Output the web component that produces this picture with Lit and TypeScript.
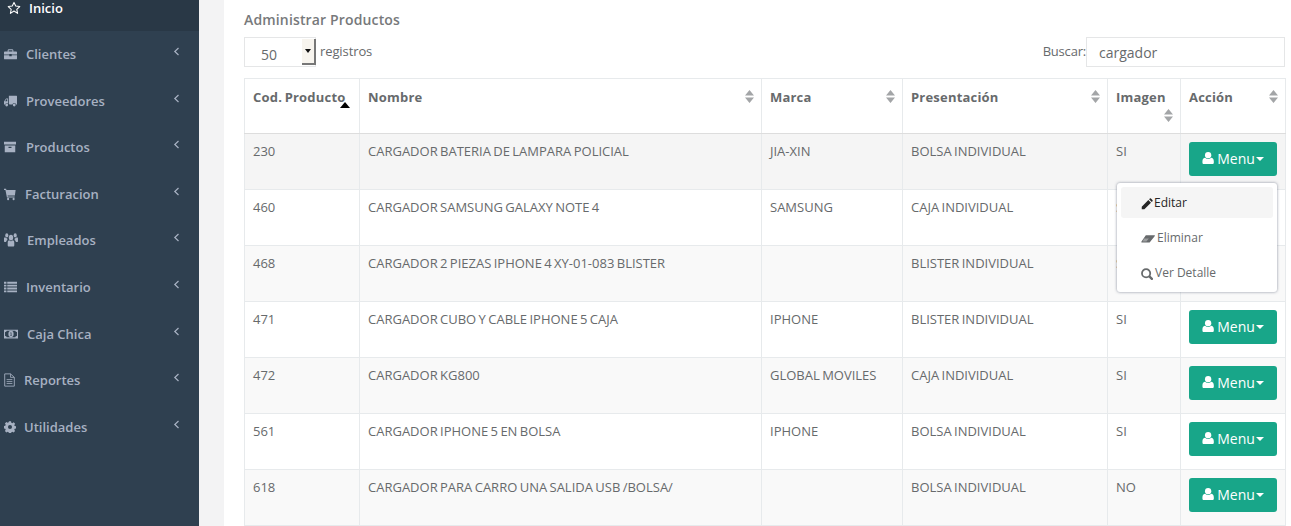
import { LitElement, html, css, svg } from 'lit';
import { customElement } from 'lit/decorators.js';

// icons drawn on a 16x16 box, roughly the font-awesome shapes
const icons: Record<string, unknown> = {
  star: svg`<path fill="none" stroke="currentColor" stroke-width="1.2" stroke-linejoin="round" d="M8 1.6l2 4.2 4.6.6-3.4 3.2.9 4.6L8 11.4l-4.1 2.8.9-4.6L1.400 6.400 6 5.800z"/>`,
  briefcase: svg`<path fill="currentColor" d="M5.500 2.500h5l1 1V5H15a1 1 0 0 1 1 1v2.500H9.500V8h-3v.5H0V6a1 1 0 0 1 1-1h3.500V3.500zM5.700 3.700V5h4.600V3.700zM0 9.500h6.500v1h3v-1H16V13a1 1 0 0 1-1 1H1a1 1 0 0 1-1-1z"/>`,
  truck: svg`<path fill="currentColor" d="M6 2h9.500a.5.500 0 0 1 .5.500V12h-1.200a2.300 2.300 0 0 0-4.400 0H6.700a2.300 2.300 0 0 0-.7-1zM5 5v6a2.300 2.300 0 0 0-3.700 1H.4a.4.4 0 0 1-.4-.4V8.500L2.500 5zM4 6H3L1.300 8.200H4z"/><circle fill="currentColor" cx="3.300" cy="12.500" r="1.700"/><circle fill="currentColor" cx="12.600" cy="12.500" r="1.700"/>`,
  archive: svg`<path fill="currentColor" d="M0 2h16v3.200H0zM1 6.200h14V14H1zM6 7.800v1.400h4V7.800z" fill-rule="evenodd"/>`,
  cart: svg`<path fill="currentColor" d="M0 2h2.800l.4 1.400H15.500l-1 6.200H4.800l.3 1.200h9.100V12H3.900L1.900 3.300H0z"/><circle fill="currentColor" cx="5.500" cy="13.800" r="1.400"/><circle fill="currentColor" cx="12.800" cy="13.800" r="1.400"/>`,
  users: svg`<g transform="translate(0 -2) scale(.94 1.250)"><circle fill="currentColor" cx="8.500" cy="5.800" r="2.700"/><circle fill="currentColor" cx="3.400" cy="3.800" r="1.900"/><circle fill="currentColor" cx="13.600" cy="3.800" r="1.900"/><path fill="currentColor" d="M4.500 10.500c0-1.500 1-2.200 2-2.200.6.500 1.300.8 2 .8s1.400-.3 2-.8c1 0 2 .7 2 2.200v2.300c0 .8-.6 1.200-1.200 1.200H5.700c-.6 0-1.200-.4-1.200-1.200zM0 6.800C0 6 .5 5.500 1.500 5.500c.5.500 1.200.8 2 .8h.4c-.2.600 0 1.200.5 1.700-1 .3-1.700 1-1.900 1.900H1C.4 9.900 0 9.500 0 9zM17 6.800C17 6 16.500 5.500 15.500 5.500c-.5.500-1.200.8-2 .8h-.4c.2.600 0 1.200-.5 1.700 1 .3 1.700 1 1.900 1.900H16c.6 0 1-.4 1-.9z"/></g>`,
  list: svg`<path fill="currentColor" d="M0 2h3v2.200H0zM4 2h12v2.200H4zM0 5.300h3v2.200H0zM4 5.300h12v2.200H4zM0 8.600h3v2.200H0zM4 8.600h12v2.200H4zM0 11.900h3v2.200H0zM4 11.900h12v2.200H4z"/>`,
  money: svg`<path fill="currentColor" fill-rule="evenodd" d="M0 3h16v10H0zM1.200 5.600v4.800a2 2 0 0 1 2 1.400h9.600a2 2 0 0 1 2-1.400V5.600a2 2 0 0 1-2-1.400H3.200a2 2 0 0 1-2 1.400z"/><ellipse fill="currentColor" cx="8" cy="8" rx="3" ry="3.600"/><path fill="#2f4050" d="M7.200 6.300h1.300v3.200h.6v.6H7v-.6h.7V7.200h-.5z"/>`,
  file: svg`<path fill="none" stroke="currentColor" stroke-width="1.100" d="M1 1h8.500L15 5v10H1z"/><path fill="none" stroke="currentColor" d="M9.500 1v4H15M3.800 7.500h8.400M3.800 9.800h8.400M3.800 12h8.400"/>`,
  cog: svg`<path fill="currentColor" fill-rule="evenodd" d="M6.600 1h2.800l.4 2 1.300.6 1.700-1.100 2 2-1.100 1.700.6 1.300 2 .4v2.800l-2 .4-.6 1.300 1.100 1.700-2 2-1.700-1.100-1.300.6-.4 2H6.600l-.4-2-1.300-.6-1.700 1.100-2-2 1.100-1.700-.6-1.300-2-.4V7.300l2-.4.600-1.300-1.100-1.700 2-2 1.700 1.100 1.300-.6zM8 6a2.700 2.700 0 1 0 0 5.400A2.700 2.700 0 0 0 8 6z" transform="translate(0 -.7)"/>`,
  user: svg`<circle fill="currentColor" cx="7" cy="4.800" r="3.600"/><path fill="currentColor" d="M3.600 7.800c.9.900 2.100 1.400 3.400 1.400s2.500-.5 3.400-1.400c1.800.2 3.100 1.500 3.100 4v1.500c0 .9-.7 1.500-1.500 1.500H2c-.8 0-1.500-.6-1.500-1.500v-1.500c0-2.500 1.300-3.800 3.100-4z"/>`,
  pencil: svg`<path fill="currentColor" d="M1 11.500L9.800 2.700l3.500 3.500L4.500 15H1zM10.800 1.700l1-1a1 1 0 0 1 1.400 0l2.100 2.100a1 1 0 0 1 0 1.400l-1 1z"/>`,
  eraser: svg`<path fill="currentColor" d="M5.500 3h9.800a.6.600 0 0 1 .5.900l-5.700 8.300a1 1 0 0 1-.8.300H.9a.6.600 0 0 1-.5-.9z"/><path fill="#fff" d="M3.600 7.200l5.400.1-2.800 4-4.300.1z" opacity=".35"/>`,
  search: svg`<path fill="none" stroke="currentColor" stroke-width="2.400" d="M6.800 1.500a5.500 5.500 0 1 0 0 11 5.500 5.500 0 0 0 0-11z"/><path fill="none" stroke="currentColor" stroke-width="3" stroke-linecap="round" d="M11.500 11.500l3 3"/>`,
};

const nav = [
  { label: 'Clientes', icon: 'briefcase', w: 13, h: 14, gap: 9 },
  { label: 'Proveedores', icon: 'truck', w: 13, h: 14, gap: 9 },
  { label: 'Productos', icon: 'archive', w: 12, h: 14, gap: 10 },
  { label: 'Facturacion', icon: 'cart', w: 12, h: 14, gap: 9 },
  { label: 'Empleados', icon: 'users', w: 14, h: 14, gap: 9 },
  { label: 'Inventario', icon: 'list', w: 13, h: 14, gap: 9 },
  { label: 'Caja Chica', icon: 'money', w: 14, h: 14, gap: 9 },
  { label: 'Reportes', icon: 'file', w: 11, h: 14, gap: 9 },
  { label: 'Utilidades', icon: 'cog', w: 12, h: 12, gap: 8 },
];

const rows = [
  ['230', 'CARGADOR BATERIA DE LAMPARA POLICIAL', 'JIA-XIN', 'BOLSA INDIVIDUAL', 'SI'],
  ['460', 'CARGADOR SAMSUNG GALAXY NOTE 4', 'SAMSUNG', 'CAJA INDIVIDUAL', 'SI'],
  ['468', 'CARGADOR 2 PIEZAS IPHONE 4 XY-01-083 BLISTER', '', 'BLISTER INDIVIDUAL', 'SI'],
  ['471', 'CARGADOR CUBO Y CABLE IPHONE 5 CAJA', 'IPHONE', 'BLISTER INDIVIDUAL', 'SI'],
  ['472', 'CARGADOR KG800', 'GLOBAL MOVILES', 'CAJA INDIVIDUAL', 'SI'],
  ['561', 'CARGADOR IPHONE 5 EN BOLSA', 'IPHONE', 'BOLSA INDIVIDUAL', 'SI'],
  ['618', 'CARGADOR PARA CARRO UNA SALIDA USB /BOLSA/', '', 'BOLSA INDIVIDUAL', 'NO'],
];

const icon = (name: string) => html`<svg viewBox="0 0 16 16" preserveAspectRatio="none">${icons[name]}</svg>`;

@customElement('app-root')
export class AppRoot extends LitElement {
  static styles = css`
    :host {
      display: flex;
      height: 526px;
      overflow: hidden;
      background: #f3f3f4;
      font-family: "Open Sans", sans-serif;
      font-size: 13px;
      color: #676a6c;
    }
    svg {
      display: block;
    }

    .sidebar {
      width: 199px;
      flex: none;
      background: #2f4050;
      color: #a7b1c2;
      font-weight: 600;
    }
    .item {
      display: flex;
      align-items: center;
      height: 46.55px;
      padding-left: 4px;
    }
    .item .ic {
      flex: none;
    }
    .item .ic svg {
      width: 100%;
      height: 100%;
    }
    .item .chev {
      margin-left: auto;
      margin-right: 19px;
      margin-bottom: 5px;
      width: 7px;
      height: 9px;
    }
    .item.active {
      height: 31px;
      padding: 0 0 15px 7px;
      box-sizing: border-box;
      background: #293846;
      color: #fff;
    }

    .panel {
      margin-left: 25px;
      flex: 1;
      background: #fff;
      padding: 11px 6px 0 20px;
    }
    .title {
      font-size: 14px;
      line-height: 18px;
      font-weight: 600;
      letter-spacing: 0.15px;
      color: #77797b;
      margin-bottom: 8px;
    }
    .controls {
      display: flex;
      justify-content: space-between;
      height: 30px;
      margin: 0 1px 11px 0;
    }
    .length, .filter {
      display: flex;
    }
    .select {
      width: 72px;
      height: 30px;
      box-sizing: border-box;
      border: 1px solid #e5e6e7;
      display: flex;
      font-size: 14px;
    }
    .select span {
      flex: 1;
      padding: 7px 0 0 16px;
      line-height: 20px;
    }
    .select .arrow {
      width: 14px;
      flex: none;
      box-sizing: border-box;
      margin: 1px -1px 1px 0;
      background: #f7f4ee;
      border-right: 2px solid #777;
      border-bottom: 2px solid #777;
      display: flex;
      justify-content: center;
      padding-top: 10px;
    }
    .select .arrow::before {
      content: "";
      border: 3.500px solid transparent;
      border-top: 4px solid #111;
      border-bottom: 0;
      height: 0;
    }
    .length label {
      margin-left: 4px;
      line-height: 28px;
      letter-spacing: -0.1px;
    }
    .filter label {
      line-height: 28px;
      letter-spacing: -0.2px;
    }
    .filter input {
      width: 199px;
      height: 30px;
      box-sizing: border-box;
      border: 1px solid #e5e6e7;
      padding: 0 12px;
      font: 14px "Open Sans", sans-serif;
      color: #676a6c;
      outline: none;
    }

    table {
      width: 1041px;
      table-layout: fixed;
      border-collapse: collapse;
    }
    th, td {
      border: 1px solid #e7eaec;
      padding: 8px;
      text-align: left;
      vertical-align: top;
      line-height: 18.570px;
      position: relative;
      word-spacing: -1px;
    }
    th {
      height: 37px;
      padding-top: 9px;
      font-weight: 700;
      border-bottom: 1px solid #ddd;
      letter-spacing: 0.2px;
    }
    tbody tr:nth-child(odd) td {
      background: #f9f9f9;
    }
    tbody tr.hover td {
      background: #f5f5f5;
    }
    .sort {
      position: absolute;
      right: 7px;
      top: 11px;
      width: 9px;
      height: 13px;
      color: #a3a5a7;
    }
    .sort.low {
      top: 30px;
    }
    .asc {
      position: absolute;
      left: 95px;
      top: 23px;
      width: 0;
      border: 5.500px solid transparent;
      border-bottom: 6px solid #000;
      border-top: 0;
    }

    .action {
      position: relative;
      display: block;
      width: 88px;
      height: 39px;
    }
    button {
      width: 88px;
      height: 34px;
      border: 0;
      border-radius: 3px;
      background: #18a689;
      color: #fff;
      font: 14px "Open Sans", sans-serif;
      display: flex;
      align-items: center;
      justify-content: center;
      padding: 0 0 2px;
    }
    button svg {
      width: 14px;
      height: 14px;
      margin-right: 1px;
    }
    button::after {
      content: "";
      border: 4px solid transparent;
      border-top: 4px solid #fff;
      border-bottom: 0;
      margin-left: 1px;
      margin-top: 2px;
    }
    .menu {
      position: absolute;
      z-index: 5;
      right: 0;
      top: 41px;
      width: 160px;
      box-sizing: border-box;
      padding: 4px;
      background: #fff;
      border-radius: 3px;
      box-shadow: 0 0 3px rgba(86, 96, 117, 0.7);
      font-size: 12px;
      word-spacing: normal;
      display: flex;
      flex-direction: column;
      gap: 4px;
    }
    .menu a {
      display: flex;
      align-items: center;
      height: 31px;
      box-sizing: border-box;
      padding: 2px 0 0 20px;
      border-radius: 3px;
    }
    .menu a svg {
      width: 12px;
      height: 12px;
      margin-right: 2px;
    }
    .menu a.wide svg {
      width: 14px;
    }
    .menu a.on {
      background: #f5f5f5;
      color: #262626;
    }
    .menu a.on svg {
      margin-right: 1px;
    }
  `;

  private sortIcon(low = false) {
    return html`<svg class="sort ${low ? 'low' : ''}" viewBox="0 0 9 13">
      <path fill="currentColor" d="M4.500 0L9 5.500H0zM0 7.500h9L4.500 13z"/>
    </svg>`;
  }

  private renderMenu() {
    return html`<div class="menu">
      <a class="on">${icon('pencil')}Editar</a>
      <a class="wide">${icon('eraser')}Eliminar</a>
      <a>${icon('search')}Ver Detalle</a>
    </div>`;
  }

  render() {
    return html`
      <nav class="sidebar">
        <div class="item active">
          <div class="ic" style="width:14px;height:14px;margin-right:8px">${icon('star')}</div>Inicio
        </div>
        ${nav.map(n => html`
          <div class="item">
            <div class="ic" style="width:${n.w}px;height:${n.h}px;margin-right:${n.gap}px">${icon(n.icon)}</div>
            ${n.label}
            <svg class="chev" viewBox="0 0 7 9"><path fill="none" stroke="currentColor" stroke-width="1.200" d="M5.500 1L1.800 4.500 5.500 8"/></svg>
          </div>`)}
      </nav>
      <main class="panel">
        <div class="title">Administrar Productos</div>
        <div class="controls">
          <div class="length">
            <div class="select"><span>50</span><div class="arrow"></div></div>
            <label>registros</label>
          </div>
          <div class="filter">
            <label>Buscar:</label>
            <input value="cargador" />
          </div>
        </div>
        <table>
          <colgroup>
            <col style="width:115px" /><col style="width:402px" /><col style="width:141px" />
            <col style="width:205px" /><col style="width:73px" /><col style="width:105px" />
          </colgroup>
          <thead>
            <tr>
              <th>Cod. Producto<span class="asc"></span></th>
              <th>Nombre${this.sortIcon()}</th>
              <th>Marca${this.sortIcon()}</th>
              <th>Presentación${this.sortIcon()}</th>
              <th>Imagen${this.sortIcon(true)}</th>
              <th>Acción${this.sortIcon()}</th>
            </tr>
          </thead>
          <tbody>
            ${rows.map((r, i) => html`
              <tr class="${i === 0 ? 'hover' : ''}">
                ${r.map(c => html`<td>${c}</td>`)}
                <td>
                  <div class="action">
                    <button>${icon('user')}Menu</button>
                    ${i === 0 ? this.renderMenu() : ''}
                  </div>
                </td>
              </tr>`)}
          </tbody>
        </table>
      </main>
    `;
  }
}
